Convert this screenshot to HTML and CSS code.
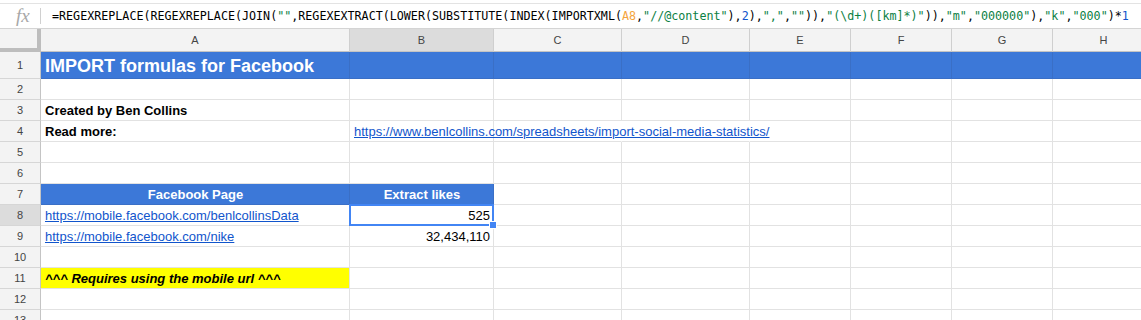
FILE: index.html
```html
<html>
<head>
<meta name="viewport" content="width=device-width, initial-scale=1">
<link rel="stylesheet" href="styles.css">
</head>
<body>
<div class="toolbar-edge"></div>
<div class="formula-bar">
  <div class="fx"><span>fx</span></div>
  <div class="formula">=REGEXREPLACE(REGEXREPLACE(JOIN(<span class="str">""</span>,REGEXEXTRACT(LOWER(SUBSTITUTE(INDEX(IMPORTXML(<span class="ref">A8</span>,<span class="str">"//@content"</span>),<span class="num">2</span>),<span class="str">","</span>,<span class="str">""</span>)),<span class="str">"(\d+)([km]*)"</span>)),<span class="str">"m"</span>,<span class="str">"000000"</span>),<span class="str">"k"</span>,<span class="str">"000"</span>)*<span class="num">1</span></div>
</div>

<div class="sheet">
  <div class="row col-heads">
    <div class="corner"></div>
    <div class="head">A</div>
    <div class="head active">B</div>
    <div class="head">C</div>
    <div class="head">D</div>
    <div class="head">E</div>
    <div class="head">F</div>
    <div class="head">G</div>
    <div class="head">H</div>
  </div>

  <div class="row tall">
    <div class="num-head">1</div>
    <div class="cell blue title">IMPORT formulas for Facebook</div>
    <div class="cell blue"></div>
    <div class="cell blue"></div>
    <div class="cell blue"></div>
    <div class="cell blue"></div>
    <div class="cell blue"></div>
    <div class="cell blue"></div>
    <div class="cell blue"></div>
  </div>

  <div class="row">
    <div class="num-head">2</div>
    <div class="cell"></div><div class="cell"></div><div class="cell"></div><div class="cell"></div>
    <div class="cell"></div><div class="cell"></div><div class="cell"></div><div class="cell"></div>
  </div>

  <div class="row">
    <div class="num-head">3</div>
    <div class="cell bold">Created by Ben Collins</div>
    <div class="cell"></div><div class="cell"></div><div class="cell"></div>
    <div class="cell"></div><div class="cell"></div><div class="cell"></div><div class="cell"></div>
  </div>

  <div class="row">
    <div class="num-head">4</div>
    <div class="cell bold">Read more:</div>
    <div class="cell overflow"><a href="#">https://www.benlcollins.com/spreadsheets/import-social-media-statistics/</a></div>
    <div class="cell no-line"></div><div class="cell no-line"></div>
    <div class="cell"></div><div class="cell"></div><div class="cell"></div><div class="cell"></div>
  </div>

  <div class="row">
    <div class="num-head">5</div>
    <div class="cell"></div><div class="cell"></div><div class="cell"></div><div class="cell"></div>
    <div class="cell"></div><div class="cell"></div><div class="cell"></div><div class="cell"></div>
  </div>

  <div class="row">
    <div class="num-head">6</div>
    <div class="cell"></div><div class="cell"></div><div class="cell"></div><div class="cell"></div>
    <div class="cell"></div><div class="cell"></div><div class="cell"></div><div class="cell"></div>
  </div>

  <div class="row">
    <div class="num-head">7</div>
    <div class="cell blue th">Facebook Page</div>
    <div class="cell blue th">Extract likes</div>
    <div class="cell"></div><div class="cell"></div>
    <div class="cell"></div><div class="cell"></div><div class="cell"></div><div class="cell"></div>
  </div>

  <div class="row">
    <div class="num-head active">8</div>
    <div class="cell"><a href="#">https://mobile.facebook.com/benlcollinsData</a></div>
    <div class="cell right selected">525<span class="handle"></span></div>
    <div class="cell"></div><div class="cell"></div>
    <div class="cell"></div><div class="cell"></div><div class="cell"></div><div class="cell"></div>
  </div>

  <div class="row">
    <div class="num-head">9</div>
    <div class="cell"><a href="#">https://mobile.facebook.com/nike</a></div>
    <div class="cell right">32,434,110</div>
    <div class="cell"></div><div class="cell"></div>
    <div class="cell"></div><div class="cell"></div><div class="cell"></div><div class="cell"></div>
  </div>

  <div class="row">
    <div class="num-head">10</div>
    <div class="cell"></div><div class="cell"></div><div class="cell"></div><div class="cell"></div>
    <div class="cell"></div><div class="cell"></div><div class="cell"></div><div class="cell"></div>
  </div>

  <div class="row">
    <div class="num-head">11</div>
    <div class="cell yellow bold italic">^^^ Requires using the mobile url ^^^</div>
    <div class="cell"></div><div class="cell"></div><div class="cell"></div>
    <div class="cell"></div><div class="cell"></div><div class="cell"></div><div class="cell"></div>
  </div>

  <div class="row">
    <div class="num-head">12</div>
    <div class="cell"></div><div class="cell"></div><div class="cell"></div><div class="cell"></div>
    <div class="cell"></div><div class="cell"></div><div class="cell"></div><div class="cell"></div>
  </div>

  <div class="row">
    <div class="num-head">13</div>
    <div class="cell"></div><div class="cell"></div><div class="cell"></div><div class="cell"></div>
    <div class="cell"></div><div class="cell"></div><div class="cell"></div><div class="cell"></div>
  </div>
</div>
</body>
</html>
```

FILE: styles.css
```css
body {
  margin: 0;
  overflow: hidden;
  background-color: #ffffff;
  font-family: "Liberation Sans", Arial, sans-serif;
  font-size: 13px;
  color: #000000;
}

/* formula bar */
.toolbar-edge {
  height: 3px;
  border-bottom: 1px solid #e3e3e3;
}

.formula-bar {
  display: flex;
  align-items: center;
  height: 24px;
  border-bottom: 1px solid #d4d4d4;
}

.fx {
  width: 41px;
  flex-shrink: 0;
  display: flex;
  align-items: center;
  justify-content: flex-end;
}

.fx span {
  display: block;
  width: 33px;
  height: 16px;
  line-height: 16px;
  padding-left: 8px;
  box-sizing: border-box;
  border-right: 1px solid #d0d0d0;
  font-family: "Liberation Serif", serif;
  font-style: italic;
  font-size: 19px;
  color: #a8a8a8;
}

.formula {
  padding-left: 11px;
  white-space: nowrap;
  font-family: "DejaVu Sans Mono", monospace;
  font-size: 11.7px;
  color: #000000;
}

.formula .str { color: #0b8043; }
.formula .num { color: #1155cc; }
.formula .ref { color: #f4a43c; }

/* grid */
.sheet {
  width: 1160px;
}

.row {
  display: grid;
  grid-template-columns: 41px 309px 144px 128px 128px 101px 101px 101px 102px;
  height: 21px;
}

.row.tall { height: 27px; }
.row.col-heads { height: 23px; }

.corner {
  box-sizing: border-box;
  background: #f3f3f3;
  border-right: 4px solid #bdbdbd;
  border-bottom: 4px solid #bdbdbd;
}

.head {
  box-sizing: border-box;
  background: #f3f3f3;
  border-right: 1px solid #cfcfcf;
  border-bottom: 1px solid #c4c4c4;
  color: #444444;
  font-size: 11px;
  text-align: center;
  line-height: 22px;
}

.head.active,
.num-head.active {
  background: #dcdcdc;
}

.num-head {
  box-sizing: border-box;
  background: #f3f3f3;
  border-right: 1px solid #c4c4c4;
  border-bottom: 1px solid #d6d6d6;
  color: #444444;
  font-size: 11px;
  text-align: center;
  display: flex;
  align-items: center;
  justify-content: center;
}

.cell {
  position: relative;
  box-sizing: border-box;
  border-right: 1px solid #e2e2e2;
  border-bottom: 1px solid #e2e2e2;
  padding: 0 3px 2px 4px;
  line-height: 15px;
  white-space: nowrap;
  display: flex;
  align-items: flex-end;
}

.cell.overflow { overflow: visible; z-index: 1; }
.cell.no-line { border-right-color: transparent; }

.cell a {
  color: #1155cc;
  text-decoration: underline;
}

.bold { font-weight: bold; }
.italic { font-style: italic; }
.right { justify-content: flex-end; }

.blue {
  background: #3c78d8;
  border-right-color: #3a6fc6;
  border-bottom-color: #3a6fc6;
  color: #ffffff;
}

.title {
  font-size: 18px;
  font-weight: bold;
  line-height: 21px;
  padding-bottom: 1px;
}

.th {
  font-weight: bold;
  justify-content: center;
}

.yellow {
  background: #ffff00;
}

.selected {
  border: 2px solid #4285f4;
  margin: -1px 0 0 -1px;
  padding-right: 2px;
  padding-bottom: 1px;
  z-index: 2;
}

.handle {
  position: absolute;
  right: -5px;
  bottom: -5px;
  width: 6px;
  height: 6px;
  background: #4285f4;
  border: 1px solid #ffffff;
}
```
